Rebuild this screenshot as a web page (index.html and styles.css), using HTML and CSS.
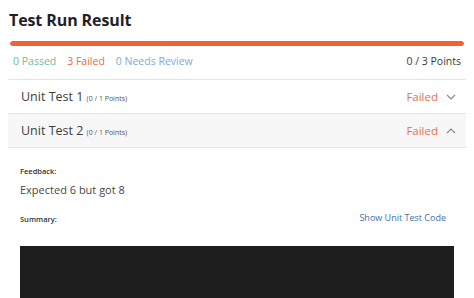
FILE: index.html
```html
<!DOCTYPE html>
<html>
<head>
<meta charset="utf-8">
<link rel="stylesheet" href="styles.css">
</head>
<body>
<div class="page">
  <h1 class="title">Test Run Result</h1>
  <div class="progress"><div class="progress-fill"></div></div>
  <div class="stats">
    <div class="counts">
      <span class="passed">0 Passed</span>
      <span class="failed">3 Failed</span>
      <span class="review">0 Needs Review</span>
    </div>
    <span class="points">0 / 3 Points</span>
  </div>
  <div class="tests">
    <div class="test-row">
      <div class="test-name">Unit Test 1 <span class="test-pts">(0 / 1 Points)</span></div>
      <div class="test-status">Failed
        <svg class="chev" width="10" height="6" viewBox="0 0 10 6"><path d="M1 1 L5 5 L9 1" fill="none" stroke="#8a8a8a" stroke-width="1.2"/></svg>
      </div>
    </div>
    <div class="test-row open">
      <div class="test-name">Unit Test 2 <span class="test-pts">(0 / 1 Points)</span></div>
      <div class="test-status">Failed
        <svg class="chev" width="10" height="6" viewBox="0 0 10 6"><path d="M1 5 L5 1 L9 5" fill="none" stroke="#8a8a8a" stroke-width="1.2"/></svg>
      </div>
    </div>
    <div class="detail">
      <div class="label">Feedback:</div>
      <div class="feedback">Expected 6 but got 8</div>
      <div class="summary-row">
        <div class="label">Summary:</div>
        <a class="code-link">Show Unit Test Code</a>
      </div>
      <div class="code-box"></div>
    </div>
  </div>
</div>
</body>
</html>
```
FILE: styles.css
```css
* { box-sizing: border-box; }
html, body { margin: 0; padding: 0; background: #fff; }
body { font-family: "Open Sans", "Liberation Sans", sans-serif; color: #333; }
.page { padding: 9px 8px 0 8px; }
.title { margin: 0 0 0 1px; font-size: 16px; font-weight: 700; color: #1f1f2b; line-height: 22px; letter-spacing: -0.1px; }
.progress { margin: 10px 2px 0 2px; height: 5px; border-radius: 3px; background: #f0f0f0; overflow: hidden; }
.progress-fill { width: 100%; height: 100%; background: #f26232; border-radius: 3px; }
.stats { display: flex; justify-content: space-between; align-items: center; padding: 0 5px 3px 5px; height: 34px; font-size: 10.5px; border-bottom: 1px solid #e4e4e4; }
.counts { display: flex; gap: 11px; }
.passed { color: #6cc097; }
.failed { color: #ec6a44; }
.review { color: #82a8dc; }
.points { color: #3a3a3a; }
.test-row { display: flex; justify-content: space-between; align-items: center; height: 34px; padding: 0 10px 0 13px; border-bottom: 1px solid #e4e4e4; }
.test-row.open { background: #f7f7f8; }
.test-name { font-size: 12.5px; color: #3d3d3d; }
.test-pts { font-size: 7px; color: #555; }
.test-status { font-size: 11.5px; color: #ec6f4a; display: flex; align-items: center; gap: 8px; }
.chev { display: block; }
.detail { padding: 18px 12px 0 12px; }
.label { font-size: 7.5px; font-weight: 600; color: #333; }
.feedback { margin-top: 6px; font-size: 11px; color: #4a4a4a; }
.summary-row { display: flex; justify-content: space-between; align-items: flex-end; margin-top: 14px; }
.code-link { font-size: 9px; color: #3f6fa8; margin-right: 8px; cursor: pointer; }
.code-box { margin-top: 22px; height: 60px; background: #1e1e1e; }
```
